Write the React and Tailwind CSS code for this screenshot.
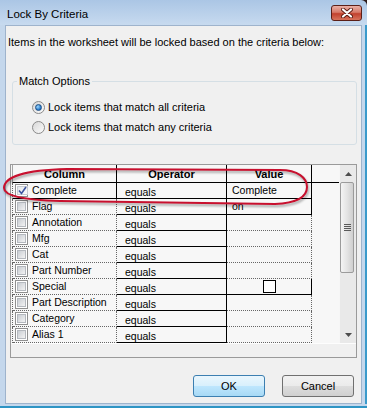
import React from "react";

const rows = [
  { name: "Complete", checked: true, value: "Complete", solidName: true, solidValue: true },
  { name: "Flag", value: "on", solidValue: true },
  { name: "Annotation" },
  { name: "Mfg" },
  { name: "Cat" },
  { name: "Part Number" },
  { name: "Special", valueBox: true, solidValue: true },
  { name: "Part Description" },
  { name: "Category" },
  { name: "Alias 1" },
];

function CheckBox({ checked }) {
  return (
    <span className="w-[13px] h-[13px] shrink-0 border border-[#8f8f8f] bg-white p-[1px] flex">
      {checked ? (
        <span className="flex-1 border border-[#c8ccd2] bg-gradient-to-br from-[#e4e7eb] to-[#fbfbfb] flex items-center justify-center">
          <svg width="9" height="9" viewBox="0 0 9 9">
            <path d="M1 4.5 L3.5 7.5 L8 1" fill="none" stroke="#3c54a0" strokeWidth="1.6" />
          </svg>
        </span>
      ) : (
        <span className="flex-1 border border-[#b4b8be] bg-gradient-to-br from-[#c9cdd3] to-[#f3f3f3]" />
      )}
    </span>
  );
}

function Radio({ checked, label }) {
  return (
    <div className="h-[20px] flex items-center gap-[3px]">
      <span className="w-[13px] h-[13px] rounded-full border border-[#8a8a8a] bg-gradient-to-br from-[#d8d8d8] to-[#fbfbfb] flex items-center justify-center">
        {checked && (
          <span className="w-[7px] h-[7px] rounded-full border border-[#1d4f86] bg-[radial-gradient(circle_at_35%_35%,#9bd8ff,#1f72c6_70%)]" />
        )}
      </span>
      <span className="leading-[13px]">{label}</span>
    </div>
  );
}

function Arrow({ up }) {
  return (
    <div className="h-[17px] flex items-center justify-center">
      <svg width="7" height="4" viewBox="0 0 7 4">
        <path d={up ? "M0 4 L3.5 0 L7 4 Z" : "M0 0 L3.5 4 L7 0 Z"} fill="#4d4d4d" />
      </svg>
    </div>
  );
}

function Grid() {
  const dotted = "border-dotted border-[#666]";
  const solid = "border-solid border-black";
  return (
    <div className="ml-[4px] mt-[19px] w-[347px] border border-[#9a9a9a] bg-[#f0f0f0]">
      <div className="flex h-[178px]">
        <div className="flex-1 pl-[1px] bg-[#f7f7f7] text-[10.5px]">
          <div className="flex h-[18px] border-l border-[#a5a5a5] border-b border-b-black font-bold text-[11px] leading-[18px] text-center">
            <div className="w-[104px] border-r border-black">Column</div>
            <div className="w-[110px] border-r border-black">Operator</div>
            <div className="w-[85px] border-r border-black">Value</div>
          </div>
          {rows.map((r) => (
            <div key={r.name} className="flex h-[16px] border-l border-dotted border-[#666]">
              <div
                className={`w-[104px] border-r border-b flex items-center gap-[4px] pl-[2px] ${
                  r.solidName ? solid : dotted
                }`}
              >
                <CheckBox checked={r.checked} />
                <span className="leading-[13px]">{r.name}</span>
              </div>
              <div className="w-[110px] border-r border-b border-black pl-[8px] leading-[16px] pt-[1px]">
                equals
              </div>
              <div
                className={`w-[85px] border-r border-b flex items-center ${
                  r.valueBox ? "justify-center" : "pl-[5px]"
                } ${r.solidValue ? solid : dotted}`}
              >
                {r.value && <span className="leading-[13px]">{r.value}</span>}
                {r.valueBox && <span className="w-[13px] h-[13px] border border-black bg-white" />}
              </div>
            </div>
          ))}
        </div>
        <div className="w-[17px] flex flex-col bg-[#e9e9e9] border-l border-[#f6f6f6]">
          <Arrow up />
          <div className="mr-[2px] h-[91px] rounded-[2px] border border-[#9b9b9b] bg-gradient-to-r from-[#f4f4f4] via-[#e4e4e4] to-[#cfcfcf] flex flex-col items-center justify-center gap-[1px]">
            <span className="w-[7px] h-[1px] bg-[#5a5a5a]" />
            <span className="w-[7px] h-[1px] bg-[#5a5a5a]" />
            <span className="w-[7px] h-[1px] bg-[#5a5a5a]" />
            <span className="w-[7px] h-[1px] bg-[#5a5a5a]" />
          </div>
          <div className="flex-1" />
          <Arrow />
        </div>
      </div>
      <div className="h-[14px] border-t border-[#fdfdfd] bg-[#f0f0f0]" />
    </div>
  );
}

export default function App() {
  return (
    <div className="relative w-[367px] h-[408px] overflow-hidden bg-[#2b1b1b] text-black text-[11px] font-['Liberation_Sans',Arial,sans-serif]">
      <div className="flex flex-col h-full">
        <div className="h-[25px] shrink-0 flex items-start justify-between pl-[7px] rounded-tr-[6px] bg-gradient-to-b from-[#abc6e5] to-[#c7daef]">
          <span className="pt-[7px] leading-[14px] text-[11.5px]">Lock By Criteria</span>
          <button className="mt-[5px] mr-[5px] w-[31px] h-[16px] rounded-[3px] border border-[#5b1f17] bg-[linear-gradient(#eab0a5,#d77a69_45%,#c2412e_55%,#d8735c)] flex items-center justify-center">
            <svg width="12" height="10" viewBox="0 0 12 10">
              <path d="M2 1.5 L10 8.5 M10 1.5 L2 8.5" stroke="#5a1a12" strokeWidth="4" strokeLinecap="round" />
              <path d="M2 1.5 L10 8.5 M10 1.5 L2 8.5" stroke="#ffffff" strokeWidth="2.2" strokeLinecap="round" />
            </svg>
          </button>
        </div>
        <div className="flex flex-1">
          <div className="w-[5px] bg-[#c4d7ec]" />
          <div className="flex-1 flex flex-col bg-[#f0f0f0] border border-[#9eb3cc]">
            <div className="mt-[10px] pl-[2px] leading-[13px]">
              Items in the worksheet will be locked based on the criteria below:
            </div>
            <fieldset className="mt-[26px] ml-[6px] w-[345px] border border-[#d5dfe5] rounded-[3px] pl-[19px] pt-[9px] pb-[7px]">
              <legend className="ml-[-15px] px-[2px] leading-[13px]">Match Options</legend>
              <Radio checked label="Lock items that match all criteria" />
              <Radio label="Lock items that match any criteria" />
            </fieldset>
            <Grid />
            <div className="mt-[17px] flex justify-end gap-[17px] pr-[7px]">
              <button className="w-[72px] h-[22px] rounded-[3px] border border-[#3c7fb1] bg-[linear-gradient(#eaf6fd,#d9f0fc_48%,#bee6fd_52%,#a7d9f5)] text-[11px]">
                OK
              </button>
              <button className="w-[72px] h-[22px] rounded-[3px] border border-[#707070] bg-[linear-gradient(#f2f2f2,#ebebeb_48%,#dddddd_52%,#cfcfcf)] text-[11px]">
                Cancel
              </button>
            </div>
          </div>
          <div className="w-[5px] bg-[linear-gradient(90deg,#c4d7ec_60%,#3a9acb_60%)]" />
        </div>
        <div className="h-[4px] shrink-0 bg-[linear-gradient(#c4d7ec_50%,#2e94c4_50%)]" />
      </div>
      <svg className="absolute left-0 top-0 pointer-events-none drop-shadow-[1px_2px_1px_rgba(0,0,0,0.35)]" width="367" height="408">
        <path
          d="M4 188 C4 177 25 170 67 169 L280 170 C298 170 307 178 307 187 C307 197 298 203 275 204 L60 201 C25 200 4 196 4 188 Z"
          fill="none"
          stroke="#c8102e"
          strokeWidth="2"
        />
      </svg>
    </div>
  );
}
